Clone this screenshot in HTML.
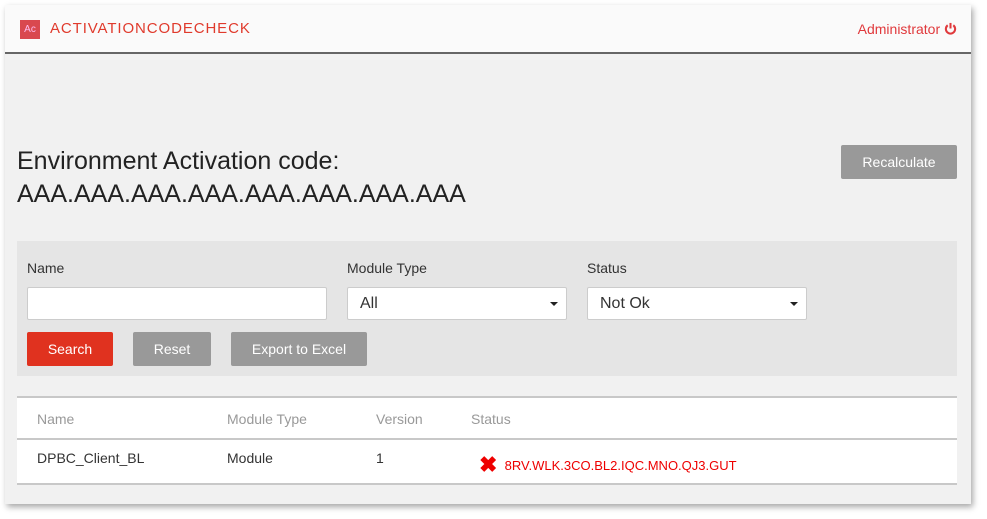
<!DOCTYPE html>
<html><head><style>
body{margin:0;width:987px;height:519px;background:#fff;font-family:"Liberation Sans",sans-serif;overflow:hidden;position:relative}
.frame{position:absolute;left:5px;top:5px;width:966px;height:499px;background:#f1f1f1;box-shadow:2px 3px 6px rgba(0,0,0,.35)}
.hdr{position:absolute;left:0;top:0;width:966px;height:47px;background:#fafafa;border-bottom:2px solid #666}
.logo{position:absolute;left:15px;top:15px;width:20px;height:19px;background:#d9484f;color:#fbe;font-size:10px;line-height:19px;text-align:center}
.title{position:absolute;left:45px;top:15px;color:#e03a2c;font-size:15px;letter-spacing:0.9px}
.adm{position:absolute;right:14px;top:16px;color:#e0393c;font-size:14px}
h1{position:absolute;left:12px;top:140px;margin:0;font-weight:normal;font-size:25px;line-height:33px;color:#222}
.btn{position:absolute;height:34px;color:#fff;font-size:14px;line-height:34px;text-align:center;border-radius:2px;background:#999}
.filt{position:absolute;left:12px;top:236px;width:940px;height:135px;background:#e5e5e5}
.lbl{position:absolute;top:19px;font-size:14px;color:#333}
.inp{position:absolute;top:46px;height:33px;background:#fff;border:1px solid #ccc;box-sizing:border-box;border-radius:2px;font-size:16px;line-height:31px;padding-left:12px;color:#333}
.car{position:absolute;right:8px;top:14px;border-left:4px solid transparent;border-right:4px solid transparent;border-top:4px solid #222}
.tbl{position:absolute;left:12px;top:391px;width:940px;height:85px;background:#fff;border-top:2px solid #c8c8c8;border-bottom:2px solid #c8c8c8}
.th{position:absolute;top:13px;font-size:14px;color:#999}
.td{position:absolute;top:52px;font-size:14px;color:#333}
</style></head><body>
<div class="frame">
<div class="hdr"><div class="logo">Ac</div><div class="title">ACTIVATIONCODECHECK</div>
<div class="adm">Administrator <svg width="13" height="13" viewBox="0 0 14 14" style="vertical-align:-1px"><path d="M4 3.5A5 5 0 1 0 10 3.5" fill="none" stroke="#e0393c" stroke-width="2.2"/><path d="M7 1v6" stroke="#e0393c" stroke-width="2.2"/></svg></div></div>
<h1>Environment Activation code:<br>AAA.AAA.AAA.AAA.AAA.AAA.AAA.AAA</h1>
<div class="btn" style="left:836px;top:140px;width:116px">Recalculate</div>
<div class="filt">
<div class="lbl" style="left:10px">Name</div>
<div class="lbl" style="left:330px">Module Type</div>
<div class="lbl" style="left:570px">Status</div>
<div class="inp" style="left:10px;width:300px"></div>
<div class="inp" style="left:330px;width:220px">All<span class="car"></span></div>
<div class="inp" style="left:570px;width:220px">Not Ok<span class="car"></span></div>
<div class="btn" style="left:10px;top:91px;width:86px;background:#e0321f">Search</div>
<div class="btn" style="left:116px;top:91px;width:78px">Reset</div>
<div class="btn" style="left:214px;top:91px;width:136px">Export to Excel</div>
</div>
<div class="tbl">
<div class="th" style="left:20px">Name</div><div class="th" style="left:210px">Module Type</div><div class="th" style="left:359px">Version</div><div class="th" style="left:454px">Status</div>
<div style="position:absolute;left:0;top:40px;width:940px;height:2px;background:#c8c8c8"></div>
<div class="td" style="left:20px">DPBC_Client_BL</div><div class="td" style="left:210px">Module</div><div class="td" style="left:359px">1</div>
<div class="td" style="left:462px;top:54px;color:#e00;font-size:13px"><span style="font-size:22px;font-weight:bold;color:#e00;vertical-align:-2px">✖</span>&nbsp; 8RV.WLK.3CO.BL2.IQC.MNO.QJ3.GUT</div>
</div>
</div>
</body></html>
